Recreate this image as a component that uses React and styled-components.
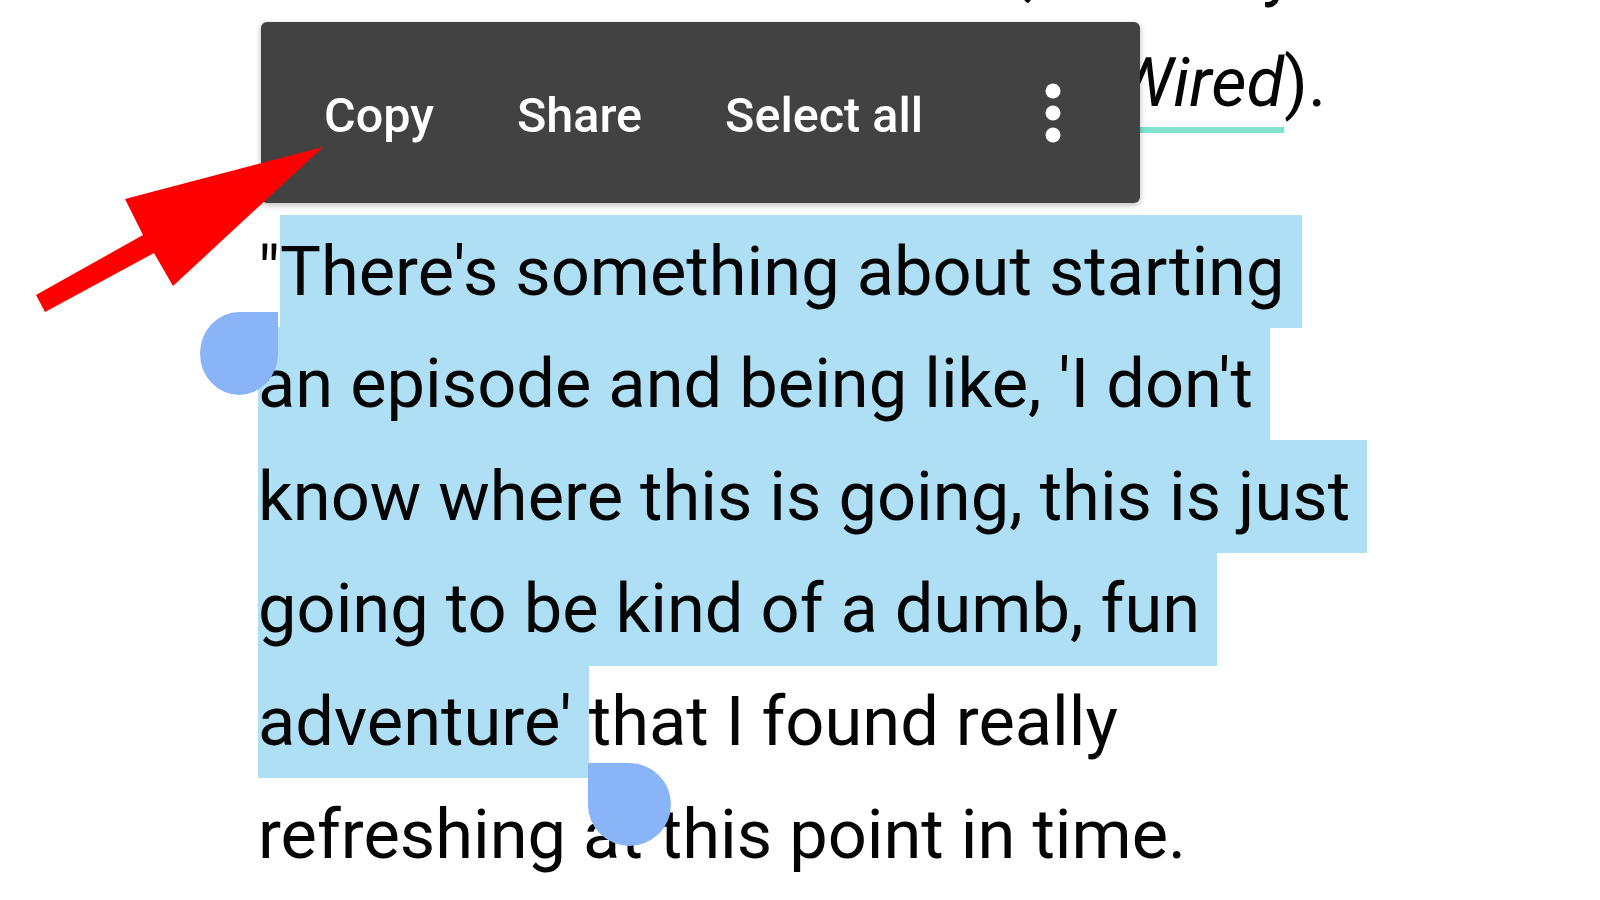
import React from "react";
import styled, { createGlobalStyle } from "styled-components";

const GlobalStyle = createGlobalStyle`
  html, body {
    margin: 0;
    padding: 0;
    background: #ffffff;
    overflow: hidden;
  }
`;

const Page = styled.div`
  position: relative;
  width: 1600px;
  height: 900px;
  overflow: hidden;
  background: #ffffff;
`;

const Article = styled.article`
  margin-top: -86px;
  padding-left: 258px;
  font-family: Roboto, "Noto Sans", sans-serif;
  font-size: 68.6px;
  line-height: 112.5px;
  color: #050505;
`;

const Paragraph = styled.div`
  margin-top: ${(p) => p.$gap || 0}px;
`;

const Line = styled.div`
  white-space: pre;
  height: 112.5px;
`;

const Sel = styled.span`
  background: #aedff4;
  padding: 16.3px 0;
`;

const Link = styled.a`
  font-style: italic;
  color: inherit;
  text-decoration: underline;
  text-decoration-color: #7fe3d2;
  text-decoration-thickness: 6px;
  text-underline-offset: 21px;
  text-decoration-skip-ink: none;
`;

const Toolbar = styled.div`
  position: absolute;
  left: 261px;
  top: 22px;
  width: 879px;
  height: 181px;
  box-sizing: border-box;
  padding: 6px 0 0 63px;
  display: flex;
  align-items: center;
  gap: 83px;
  background: #424242;
  border-radius: 6px;
  box-shadow: 0 2px 6px rgba(0, 0, 0, 0.28);
  font-family: Roboto, "Noto Sans", sans-serif;
  font-weight: 500;
  font-size: 48.5px;
  color: #ffffff;
`;

const Action = styled.span`
  white-space: nowrap;
`;

const More = styled.span`
  margin-left: auto;
  margin-right: 79px;
  margin-bottom: 6px;
  display: flex;
`;

const Handle = styled.div`
  position: absolute;
  left: ${(p) => p.$x}px;
  top: ${(p) => p.$y}px;
  width: ${(p) => p.$w}px;
  height: 83px;
  background: #8ab4f8;
  border-radius: ${(p) => (p.$side === "left" ? "50% 0 50% 50%" : "0 50% 50% 50%")};
`;

const Overlay = styled.svg`
  position: absolute;
  left: 0;
  top: 0;
  width: 1600px;
  height: 900px;
  pointer-events: none;
`;

export default function App() {
  return (
    <Page>
      <GlobalStyle />
      <Article>
        <Paragraph>
          <Line>a co-creator Dan Harmon, recently</Line>
          <Line>
            has said in an interview (via <Link>Wired</Link>).
          </Line>
        </Paragraph>
        <Paragraph $gap={77}>
          <Line>
            "<Sel>There's something about starting </Sel>
          </Line>
          <Line>
            <Sel>an episode and being like, 'I don't </Sel>
          </Line>
          <Line>
            <Sel>know where this is going, this is just </Sel>
          </Line>
          <Line>
            <Sel>going to be kind of a dumb, fun </Sel>
          </Line>
          <Line>
            <Sel>adventure' </Sel>that I found really
          </Line>
          <Line>refreshing at this point in time.</Line>
        </Paragraph>
      </Article>

      <Toolbar>
        <Action>Copy</Action>
        <Action>Share</Action>
        <Action>Select all</Action>
        <More>
          <svg width="16" height="60" viewBox="0 0 16 60">
            <circle cx="8" cy="8" r="7.5" fill="#ffffff" />
            <circle cx="8" cy="30" r="7.5" fill="#ffffff" />
            <circle cx="8" cy="52" r="7.5" fill="#ffffff" />
          </svg>
        </More>
      </Toolbar>

      <Handle $side="left" $x={200} $y={312} $w={78} />
      <Handle $side="right" $x={588} $y={763} $w={83} />

      <Overlay viewBox="0 0 1600 900">
        <polygon
          points="323,147 125,199 143,235 36,295 45,312 154,253 173,286"
          fill="#ff0000"
        />
      </Overlay>
    </Page>
  );
}
